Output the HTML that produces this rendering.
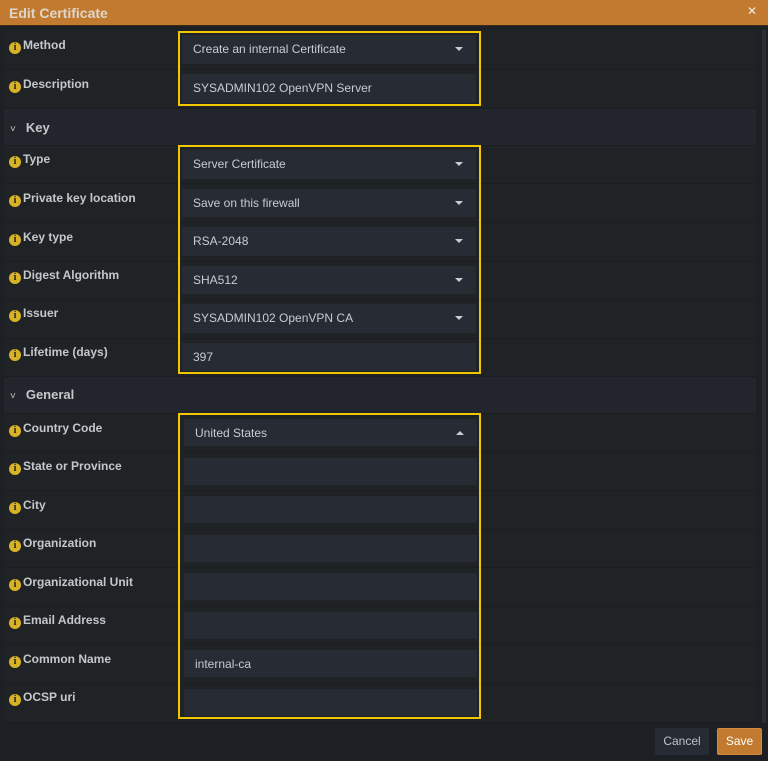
<!DOCTYPE html><html><head><style>
body{margin:0;width:768px;height:761px;background:#1c1f23;font-family:"Liberation Sans",sans-serif;position:relative;overflow:hidden;color:#c9ccd0}
.hdr{position:absolute;left:0;top:0;width:768px;height:25px;background:#c27a30;border-bottom:1px solid #3a2a18}
.hdr span{position:absolute;left:9px;top:5px;font-size:14px;font-weight:bold;color:#dcd6cc}
.hdr b{position:absolute;right:11px;top:4px;font-size:12px;font-weight:normal;color:#eee}
.tbl{position:absolute;left:4px;top:30px;width:752px;height:693px;background:#202326}
.sb{position:absolute;left:762px;top:30px;width:4px;height:693px;background:#2a2e34}
.row{position:absolute;left:4px;width:752px;border-bottom:1px solid #1b1e21}
.sec{background:#22262c}
.lbl{position:absolute;left:5px;font-size:12px;font-weight:bold;color:#c4c7cb}
.lbl i{display:inline-block;width:12px;height:12px;border-radius:50%;background:#d8b327;color:#222;font-size:10px;font-style:normal;text-align:center;line-height:12px;margin-right:2px;vertical-align:-1px;font-family:"Liberation Serif",serif;font-weight:bold}
.st{position:absolute;left:6px;font-size:13px;font-weight:bold;color:#c4c7cb}
.st s{text-decoration:none;font-weight:normal;margin-right:10px;font-size:10px}
.in{position:absolute;background:#272b33;font-size:12px;color:#c9ccd0;box-sizing:border-box;padding-left:11px;line-height:28px}
.in .c{position:absolute;right:13px;top:12px;width:0;height:0;border-left:4px solid transparent;border-right:4px solid transparent;border-top:4px solid #ccc}
.in .u{position:absolute;right:13px;top:12px;width:0;height:0;border-left:4px solid transparent;border-right:4px solid transparent;border-bottom:4px solid #ccc}
.yb{position:absolute;border:2px solid #f3c700;box-sizing:border-box}
.btn{position:absolute;font-size:12px;text-align:center;line-height:27px;border-radius:2px}
</style></head><body>
<div class="hdr"><span>Edit Certificate</span><b>✕</b></div>
<div class="tbl"></div><div class="sb"></div>

<div class="row" style="top:30px;height:39px"><div class="lbl" style="top:8px"><i>i</i>Method</div></div>
<div class="row" style="top:70px;height:38px"><div class="lbl" style="top:7px"><i>i</i>Description</div></div>
<div class="row sec" style="top:109px;height:36px"><div class="st" style="top:11px"><s>˅</s>Key</div></div>
<div class="row" style="top:146px;height:37px"><div class="lbl" style="top:6px"><i>i</i>Type</div></div>
<div class="row" style="top:184px;height:38px"><div class="lbl" style="top:7px"><i>i</i>Private key location</div></div>
<div class="row" style="top:223px;height:38px"><div class="lbl" style="top:7px"><i>i</i>Key type</div></div>
<div class="row" style="top:262px;height:37px"><div class="lbl" style="top:6px"><i>i</i>Digest Algorithm</div></div>
<div class="row" style="top:300px;height:38px"><div class="lbl" style="top:6px"><i>i</i>Issuer</div></div>
<div class="row" style="top:339px;height:37px"><div class="lbl" style="top:6px"><i>i</i>Lifetime (days)</div></div>
<div class="row sec" style="top:377px;height:36px"><div class="st" style="top:10px"><s>˅</s>General</div></div>
<div class="row" style="top:414px;height:38px"><div class="lbl" style="top:7px"><i>i</i>Country Code</div></div>
<div class="row" style="top:453px;height:37px"><div class="lbl" style="top:6px"><i>i</i>State or Province</div></div>
<div class="row" style="top:491px;height:38px"><div class="lbl" style="top:7px"><i>i</i>City</div></div>
<div class="row" style="top:530px;height:37px"><div class="lbl" style="top:6px"><i>i</i>Organization</div></div>
<div class="row" style="top:568px;height:38px"><div class="lbl" style="top:7px"><i>i</i>Organizational Unit</div></div>
<div class="row" style="top:607px;height:37px"><div class="lbl" style="top:6px"><i>i</i>Email Address</div></div>
<div class="row" style="top:645px;height:38px"><div class="lbl" style="top:7px"><i>i</i>Common Name</div></div>
<div class="row" style="top:684px;height:38px"><div class="lbl" style="top:6px"><i>i</i>OCSP uri</div></div>

<div class="in" style="left:182px;top:35px;width:294px;height:29px">Create an internal Certificate<span class="c"></span></div>
<div class="in" style="left:182px;top:74px;width:294px;height:29px">SYSADMIN102 OpenVPN Server</div>
<div class="in" style="left:182px;top:150px;width:294px;height:29px">Server Certificate<span class="c"></span></div>
<div class="in" style="left:182px;top:189px;width:294px;height:28px">Save on this firewall<span class="c"></span></div>
<div class="in" style="left:182px;top:227px;width:294px;height:29px">RSA-2048<span class="c"></span></div>
<div class="in" style="left:182px;top:266px;width:294px;height:28px">SHA512<span class="c"></span></div>
<div class="in" style="left:182px;top:304px;width:294px;height:29px">SYSADMIN102 OpenVPN CA<span class="c"></span></div>
<div class="in" style="left:182px;top:343px;width:294px;height:28px">397</div>
<div class="in" style="left:184px;top:419px;width:293px;height:27px">United States<span class="u"></span></div>
<div class="in" style="left:184px;top:458px;width:293px;height:27px"></div>
<div class="in" style="left:184px;top:496px;width:293px;height:27px"></div>
<div class="in" style="left:184px;top:535px;width:293px;height:27px"></div>
<div class="in" style="left:184px;top:573px;width:293px;height:27px"></div>
<div class="in" style="left:184px;top:612px;width:293px;height:27px"></div>
<div class="in" style="left:184px;top:650px;width:293px;height:27px">internal-ca</div>
<div class="in" style="left:184px;top:689px;width:293px;height:27px"></div>

<div class="yb" style="left:178px;top:31px;width:303px;height:75px"></div>
<div class="yb" style="left:178px;top:145px;width:303px;height:229px"></div>
<div class="yb" style="left:178px;top:413px;width:303px;height:306px"></div>

<div class="btn" style="left:655px;top:728px;width:54px;height:27px;background:#272b33;color:#bfc2c6">Cancel</div>
<div class="btn" style="left:717px;top:728px;width:45px;height:27px;background:#c27a30;color:#fff;border:1px solid #d48a3c;box-sizing:border-box;line-height:25px">Save</div>
</body></html>
